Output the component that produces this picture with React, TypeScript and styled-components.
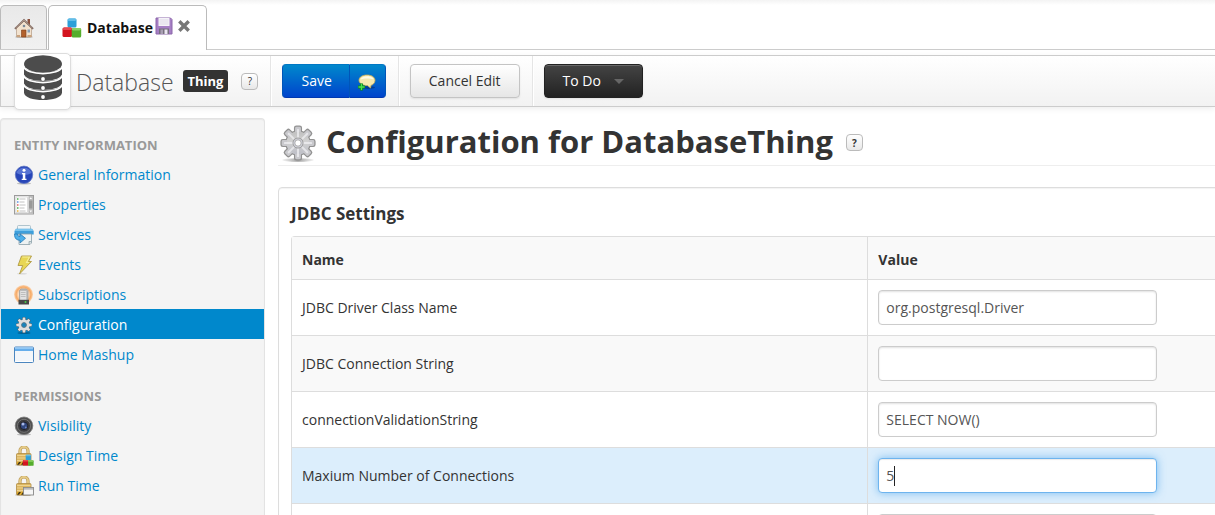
import React from "react";
import styled, { createGlobalStyle, css } from "styled-components";

const GlobalStyle = createGlobalStyle`
  *, *::before, *::after { box-sizing: border-box; }
  body {
    margin: 0;
    overflow: hidden;
    background: #fff;
    color: #333;
    font-family: "Open Sans", "Noto Sans", sans-serif;
    font-size: 14px;
    line-height: 20px;
  }
  button, input { font: inherit; }
`;

/* ---------- layout ---------- */

const Page = styled.div`
  display: flex;
  flex-direction: column;
  height: 100vh;
`;

const TabBar = styled.nav`
  display: flex;
  align-items: flex-end;
  gap: 1px;
  height: 50px;
  flex: none;
  border-bottom: 1px solid #ccc;
  background: linear-gradient(#f3f3f3, #fff 5px);
`;

const Tab = styled.div<{ $active?: boolean }>`
  display: flex;
  align-items: center;
  height: 44px;
  padding: 0 12px 0 13px;
  border: 1px solid #bbb;
  border-bottom: 0;
  border-radius: 5px 5px 0 0;
  background: linear-gradient(#e9e9e9, #f1f1f1);
  ${(p) => p.$active && css`
    gap: 2px;
    height: 45px;
    margin-bottom: -1px;
    padding: 0 14px 0 13px;
    background: #fff;
  `}
`;

const TabLink = styled.a`
  display: flex;
  align-items: center;
  gap: 5px;
  color: #111;
  font-weight: 700;
  text-decoration: none;
`;

const IconButton = styled.button`
  display: flex;
  padding: 0 1px 4px 0;
  border: 0;
  background: none;
  cursor: pointer;
`;

const Toolbar = styled.header`
  display: flex;
  align-items: stretch;
  height: 52px;
  flex: none;
  margin-top: 5px;
  border: 1px solid #ccc;
  border-right: 0;
  background: linear-gradient(#fff, #f2f2f2);
  box-shadow: 0 2px 6px rgba(0, 0, 0, 0.07);
`;

const ToolGroup = styled.div`
  display: flex;
  align-items: center;
  padding: 0 12px 0 11px;
  border-right: 1px solid #e5e5e5;
  box-shadow: 1px 0 0 #fff;
  &:last-child { border-right: 0; box-shadow: none; }
`;

const EntityGroup = styled(ToolGroup)`
  padding-left: 13px;
`;

const EntityIcon = styled.div`
  display: flex;
  justify-content: center;
  width: 57px;
  height: 57px;
  margin: -3px 5px -3px 0;
  border: 1px solid #ddd;
  border-radius: 5px;
  background: #fff;
  box-shadow: 0 1px 3px rgba(0, 0, 0, 0.08);
`;

const EntityName = styled.span`
  padding-top: 2px;
  color: #555;
  font-size: 23px;
  font-weight: 300;
  line-height: 36px;
`;

const Badge = styled.span`
  margin: 0 13px 0 9px;
  padding: 0 5px;
  border-radius: 3px;
  background: #333;
  color: #fff;
  font-size: 13px;
  font-weight: 700;
  line-height: 22px;
`;

const HelpButton = styled.button<{ $bold?: boolean }>`
  width: 17px;
  height: 17px;
  padding: 0;
  border: 1px solid #bbb;
  border-radius: 4px;
  background: linear-gradient(#fff, #e8e8e8);
  color: #333;
  font-size: 10px;
  font-weight: ${(p) => (p.$bold ? 700 : 400)};
  line-height: 14px;
  cursor: pointer;
`;

const Button = styled.button<{ $tone?: "light" | "dark" }>`
  display: flex;
  align-items: center;
  gap: 13px;
  height: 34px;
  padding: 0 18px;
  border: 1px solid ${(p) => (p.$tone === "dark" ? "#222" : "#c4c4c4")};
  border-radius: 4px;
  background: ${(p) =>
    p.$tone === "dark" ? "linear-gradient(#444, #222)" : "linear-gradient(#fff, #e6e6e6)"};
  color: ${(p) => (p.$tone === "dark" ? "#fff" : "#333")};
  box-shadow: inset 0 1px 0 rgba(255, 255, 255, 0.2), 0 1px 2px rgba(0, 0, 0, 0.08);
  cursor: pointer;
`;

const SplitButton = styled.div`
  display: flex;
  height: 34px;
`;

const SavePart = styled.button`
  height: 34px;
  padding: 0 17px 0 18px;
  border: 1px solid #0055b8;
  border-color: #0077c4 #0055b8 #0038b0;
  border-right-width: 0;
  border-radius: 4px 0 0 4px;
  background: linear-gradient(#0088cc, #0044cc);
  color: #fff;
  cursor: pointer;
  & + & {
    display: flex;
    align-items: center;
    padding: 4px 8px 0 7px;
    border-width: 1px;
    border-radius: 0 4px 4px 0;
  }
`;

const Body = styled.div`
  display: flex;
  flex: 1;
  min-height: 0;
  padding-top: 11px;
  gap: 13px;
`;

const Sidebar = styled.aside`
  flex: none;
  width: 265px;
  padding: 17px 0;
  border: 1px solid #e3e3e3;
  border-radius: 4px 4px 0 0;
  border-bottom: 0;
  background: #f4f4f4;
  box-shadow: inset 0 1px 1px rgba(0, 0, 0, 0.05);
`;

const NavHeading = styled.h2`
  margin: 0;
  padding: 0 13px 4px;
  color: #999;
  font-size: 13px;
  font-weight: 700;
  line-height: 19px;
`;

const NavList = styled.ul`
  margin: 0 0 18px;
  padding: 0;
  list-style: none;
`;

const NavLink = styled.a<{ $active?: boolean }>`
  display: flex;
  align-items: center;
  gap: 4px;
  height: 30px;
  padding: 1px 13px 0;
  color: ${(p) => (p.$active ? "#fff" : "#08c")};
  background: ${(p) => (p.$active ? "#08c" : "transparent")};
  text-decoration: none;
`;

const Main = styled.main`
  flex: 1;
  min-width: 0;
  overflow: hidden;
`;

const PageHeading = styled.div`
  display: flex;
  align-items: center;
  height: 48px;
  padding-top: 2px;
  border-bottom: 1px solid #eee;
`;

const PageTitle = styled.h1`
  margin: 0 13px 0 8px;
  padding-bottom: 4px;
  font-size: 31px;
  font-weight: 700;
  line-height: 40px;
  white-space: nowrap;
`;

const Card = styled.section`
  margin: 21px -7px 0 0;
  padding: 16px 0 12px 12px;
  border: 1px solid #ddd;
  border-radius: 4px;
  box-shadow: inset 0 1px 1px rgba(0, 0, 0, 0.05);
`;

const CardTitle = styled.h3`
  margin: 0 0 12px;
  font-size: 17px;
  font-weight: 700;
  line-height: 20px;
`;

const Settings = styled.table`
  width: 100%;
  border: 1px solid #ddd;
  border-bottom: 0;
  border-radius: 4px 0 0 0;
  border-spacing: 0;
  table-layout: fixed;
`;

const HeadCell = styled.th`
  height: 42px;
  padding: 3px 10px 0;
  background: #f9f9f9;
  text-align: left;
  font-weight: 700;
  &:first-child { width: 62%; }
  & + & { border-left: 1px solid #ddd; }
`;

const Row = styled.tr<{ $active?: boolean }>`
  background: #fff;
  &:nth-child(even) { background: #f9f9f9; }
  ${(p) => p.$active && css`&&, &&:nth-child(even) { background: #dceefc; }`}
`;

const Cell = styled.td`
  padding: 10px;
  border-top: 1px solid #ddd;
  & + & { border-left: 1px solid #ddd; }
`;

const Field = styled.div`
  position: relative;
  width: 279px;
`;

const TextInput = styled.input`
  display: block;
  width: 100%;
  height: 35px;
  padding: 0 7px;
  border: 1px solid #ccc;
  border-radius: 4px;
  background: #fff;
  color: #555;
  outline: 0;
  caret-color: transparent;
  box-shadow: inset 0 1px 2px rgba(0, 0, 0, 0.12);
  &:focus {
    border-color: #6eb4ee;
    box-shadow: inset 0 1px 1px rgba(0, 0, 0, 0.08), 0 0 8px rgba(82, 168, 236, 0.7);
  }
`;

const Caret = styled.span`
  position: absolute;
  top: 8px;
  left: 16px;
  width: 1px;
  height: 20px;
  background: #222;
`;

/* ---------- icons ---------- */

const Svg = styled.svg`
  display: block;
  flex: none;
`;

const HouseIcon = () => (
  <Svg width="20" height="20" viewBox="0 0 20 20" aria-hidden="true">
    <ellipse cx="10" cy="19" rx="9" ry="1" fill="#999" opacity=".5" />
    <path d="M13.5 1h2.500v6h-2.500z" fill="#8d5340" />
    <path d="M2.500 9.500 10 2.500l7.500 7V19h-15z" fill="#f2e2cf" stroke="#a98d74" strokeWidth=".6" />
    <path d="M.9 10.800 10 2l9.100 8.800" fill="none" stroke="#7c655c" strokeWidth="1.800" />
    <path d="M1.500 10 10 2l8.500 8" fill="none" stroke="#c4aea2" strokeWidth=".7" />
    <path d="M7.500 19v-7h4.500v7z" fill="#b2602b" stroke="#7c3d17" strokeWidth=".6" />
    <path d="M13.500 11.500h2.500v3h-2.500z" fill="#8aa0b5" />
    <circle cx="10" cy="8" r="1.300" fill="#7b8a99" />
    <path d="M3 17h3v2H3zM13.500 17h4v2h-4z" fill="#c9a27d" />
  </Svg>
);

const Cubes = () => (
  <>
    <rect x="5.500" y=".5" width="9" height="9" rx="1.500" fill="#2d9fd8" />
    <path d="M7 .5h6.500l1 1.500-1.500 1H6.500l-1-1z" fill="#63bde8" />
    <rect x=".5" y="9.500" width="9.500" height="9.500" rx="1.500" fill="#d4141f" />
    <path d="M2 9.500h7l1 1.500-1.500 1H1.500l-1-1z" fill="#e64a50" />
    <rect x="9.700" y="10" width="9.500" height="9.500" rx="1.500" fill="#55ad2c" />
    <path d="M11 10h7l1.200 1.300-1.500 1.200h-7l-1-1.200z" fill="#8dd062" />
  </>
);

const CubesIcon = () => (
  <Svg width="20" height="20" viewBox="0 0 20 20" aria-hidden="true"><Cubes /></Svg>
);

const DiskIcon = () => (
  <Svg width="18" height="18" viewBox="0 0 18 18" aria-hidden="true">
    <path d="M1 1h14.500L17 2.500V17H1z" fill="#a67fc4" stroke="#8b66aa" />
    <path d="M3.500 1h11v8h-11z" fill="#f5f3f8" />
    <path d="M4.500 3h9M4.500 5h9M4.500 7h9" stroke="#d5cfe0" strokeWidth=".7" />
    <path d="M4 11.500h10V17H4z" fill="#77707f" />
    <path d="M9.500 12.500h3V17h-3z" fill="#ece7f2" />
    <path d="M5.500 12.500H8V17H5.500z" fill="#a99fb3" />
  </Svg>
);

const CloseIcon = () => (
  <Svg width="15" height="12" viewBox="-2 0 15 12" aria-hidden="true">
    <path d="M2.500 2.500l7 7M9.500 2.500l-7 7" stroke="#777" strokeWidth="3.400" strokeLinecap="square" />
  </Svg>
);

const DatabaseIcon = () => (
  <Svg width="40" height="47" viewBox="0 0 40 47" aria-hidden="true">
    <g fill="#4c4c4c">
      <path d="M1 31.500c3 6 35 6 38 0v7c0 10-38 10-38 0z" />
      <path d="M1 22.500c3 6 35 6 38 0v7c-3 8.500-35 8.500-38 0z" />
      <path d="M1 13.500c3 6 35 6 38 0v7c-3 8.500-35 8.500-38 0z" />
      <ellipse cx="20" cy="10" rx="19" ry="8.800" />
    </g>
    <g fill="none" stroke="#fff" strokeWidth="1.600">
      <path d="M.5 12.500c2 9.500 37 9.500 39 0" />
      <path d="M.5 21.500c2 9.500 37 9.500 39 0" />
      <path d="M.5 30.500c2 9.500 37 9.500 39 0" />
    </g>
    <g fill="#fff">
      <circle cx="20" cy="25" r="1.900" />
      <circle cx="20" cy="34" r="1.900" />
      <circle cx="20" cy="43" r="1.900" />
    </g>
  </Svg>
);

const CommentAddIcon = () => (
  <Svg width="20" height="18" viewBox="0 0 20 18" aria-hidden="true">
    <ellipse cx="11" cy="13.500" rx="7" ry="1.500" fill="#013" opacity=".35" />
    <path d="M10 1C14.500 1 18 3.200 18 6.300S15.500 11 14 11.300L13.500 14l-3-2.400C6 11.600 2 9.500 2 6.300S5.500 1 10 1z" fill="#f4e8ae" stroke="#c9ad53" strokeWidth=".8" />
    <path d="M10 2.200c4 0 6.300 1.500 6.300 3.200-3-1.200-9.500-1.200-12.600 0C4 3.500 6.500 2.200 10 2.200z" fill="#fffbe6" />
    <path d="M4.500 9.500v7M1 13h7" stroke="#0a8a1a" strokeWidth="3" />
    <path d="M4.500 10v6M1.500 13h6" stroke="#4be050" strokeWidth="1.300" />
  </Svg>
);

const Teeth = ({ count, inner, outer, width }: { count: number; inner: number; outer: number; width: number }) => (
  <>
    {Array.from({ length: count }, (_, i) => (
      <rect key={i} x={-width / 2} y={-outer} width={width} height={outer - inner} rx={width / 4} transform={`rotate(${(i * 360) / count})`} />
    ))}
  </>
);

const BigGearIcon = () => (
  <Svg width="40" height="38" viewBox="0 0 40 38" aria-hidden="true">
    <defs>
      <linearGradient id="steel" x1="0" y1="-17" x2="0" y2="17" gradientUnits="userSpaceOnUse">
        <stop offset="0" stopColor="#b5b5b5" /><stop offset=".45" stopColor="#d2d2d2" /><stop offset="1" stopColor="#b4b6c2" />
      </linearGradient>
      <linearGradient id="shade"><stop offset="0" stopColor="#999" stopOpacity=".1" /><stop offset=".5" stopColor="#888" stopOpacity=".8" /><stop offset="1" stopColor="#999" stopOpacity=".1" /></linearGradient>
    </defs>
    <ellipse cx="20" cy="36" rx="16" ry="1.800" fill="url(#shade)" />
    <g transform="translate(20 19)">
      <g fill="#929292" stroke="#929292" strokeWidth="1.600"><Teeth count={8} inner={8} outer={16.800} width={6.500} /><circle r="12" /></g>
      <g fill="url(#steel)"><circle r="11.600" /></g>
      <g fill="#c9c9cd"><Teeth count={8} inner={8} outer={16.300} width={5.800} /></g>
      <circle r="11" fill="url(#steel)" />
      <g fill="#f3f3f6" opacity=".7"><Teeth count={8} inner={5} outer={14} width={2} /></g>
      <circle r="5.500" fill="#9c9c9c" />
      <circle r="4.600" fill="#d5d6df" />
      <circle r="3.200" fill="#fff" stroke="#999" strokeWidth=".8" />
    </g>
  </Svg>
);

const InfoIcon = () => (
  <>
    <ellipse cx="10" cy="18.500" rx="7" ry="1" fill="#999" opacity=".6" />
    <circle cx="10" cy="9.800" r="8.700" fill="#2846b8" stroke="#6177c4" strokeWidth=".8" />
    <path d="M2.500 8C4 1 16 1 17.500 8c-4 2.500-11 2.500-15 0z" fill="#7f9aea" opacity=".55" />
    <circle cx="10" cy="5.200" r="1.500" fill="#fff" />
    <path d="M8 8h3.300v5.700h1.200V15H7.700v-1.300h1.100V9.200H8z" fill="#fff" />
  </>
);

const PropertiesIcon = () => (
  <>
    <rect x=".5" y=".5" width="19" height="18.500" fill="#ececec" stroke="#9b9b9b" />
    <rect x="2" y="2" width="11.500" height="15.500" fill="#fff" stroke="#ccc" strokeWidth=".6" />
    <rect x="14.500" y="1" width="4.500" height="17.500" fill="#bdbdbd" />
    <rect x="15" y="5.500" width="3.500" height="8" fill="#999" />
    <path d="M15.500 4 16.800 2.200 18 4zM15.500 15.500h2.500l-1.200 2z" fill="#fff" />
    <path d="M5.500 4h6M5.500 7h5M5.500 10h6M5.500 13h5M5.500 16h6" stroke="#bbb" strokeWidth=".9" />
    <path d="M3 4h1.500M3 13h1.500" stroke="#4cae4c" strokeWidth="1.500" />
    <path d="M3 7h1.500" stroke="#5b8fe0" strokeWidth="1.500" />
    <path d="M3 10h1.500" stroke="#e06060" strokeWidth="1.500" />
    <path d="M3 16h1.500" stroke="#eeb030" strokeWidth="1.500" />
  </>
);

const ServicesIcon = () => (
  <>
    <rect x="3.500" y=".5" width="13" height="6" rx="1" fill="#f0f5f7" stroke="#9eb7c3" strokeWidth=".8" />
    <path d="M.5 6 2 3.800h16L19.700 6v3.500H.5z" fill="#3f9fdb" />
    <path d="M.8 5.800 2 4.200h16l1.300 1.600z" fill="#8fd0f3" />
    <path d="M5 9h12.500v9L16 19.500H5z" fill="#eef2f2" stroke="#8ba0a8" strokeWidth=".8" />
    <path d="M15 19.500v-3h2.500" fill="#cfd8db" stroke="#8ba0a8" strokeWidth=".7" />
    <path d="M.5 9c0 5 2.500 6.200 5.500 6.200V18l5.500-4.700L6 8.800v2.700c-1.500 0-2.500-.5-2.500-2.500z" fill="#4fb0ea" stroke="#2478b5" strokeWidth=".8" />
  </>
);

const EventsIcon = () => (
  <>
    <ellipse cx="8" cy="18.800" rx="5" ry=".8" fill="#bbb" opacity=".5" />
    <path d="M7.500 1h10l-3 5.500h3L5.500 19l3.200-8.500H4z" fill="#e8d653" stroke="#b09a45" strokeWidth=".9" strokeLinejoin="round" />
    <path d="M8.200 2h7.300l-3 5.500H15" fill="none" stroke="#f5ee9a" strokeWidth="1.100" />
  </>
);

const SubscriptionsIcon = () => (
  <>
    <defs>
      <radialGradient id="signal">
        <stop offset=".5" stopColor="#fce3cb" /><stop offset=".78" stopColor="#f6a964" /><stop offset="1" stopColor="#fbd5b2" />
      </radialGradient>
    </defs>
    <circle cx="9.500" cy="9.500" r="9.500" fill="url(#signal)" />
    <path d="M5.500 5.500 7 4h5.500L14 5.500v10H5.500z" fill="#bcbcbc" stroke="#999" strokeWidth=".7" />
    <path d="M6.200 6h6v9h-6z" fill="#e2e2e2" />
    <path d="M6.800 7.500h4.800M6.800 9.500h4.800M6.800 11.500h4.800" stroke="#b5b5b5" strokeWidth=".8" />
    <path d="M4.500 14.800h10.500v4.700H4.500z" fill="#484848" />
    <circle cx="11.500" cy="17" r="1" fill="#48d048" />
  </>
);

const SmallGearIcon = () => (
  <>
    <ellipse cx="10" cy="18" rx="6.500" ry="1" fill="#024a70" opacity=".6" />
    <g transform="translate(10 10)">
      <g fill="#4d6675" stroke="#4d6675" strokeWidth="1"><Teeth count={8} inner={3} outer={7.500} width={3} /></g>
      <g fill="#e0e0e0"><Teeth count={8} inner={3} outer={7.600} width={2.600} /></g>
      <circle r="4.100" fill="none" stroke="#dedede" strokeWidth="3" />
      <circle r="2.400" fill="#1683bd" stroke="#777" strokeWidth=".6" />
    </g>
  </>
);

const WindowIcon = () => (
  <>
    <rect x=".5" y="2" width="19" height="15.500" rx="1" fill="#f3f6fa" stroke="#4c86bf" />
    <path d="M1 2.500h18V6H1z" fill="#65adeb" />
    <path d="M1 2.500h18v1.200H1z" fill="#a4d3fa" />
    <path d="M1.500 16.500h17" stroke="#fff" />
  </>
);

const LensIcon = () => (
  <>
    <ellipse cx="10" cy="18.500" rx="7" ry="1" fill="#999" opacity=".6" />
    <circle cx="10" cy="9.800" r="8.800" fill="#505050" stroke="#777" strokeWidth=".8" />
    <circle cx="10" cy="9.800" r="6.500" fill="#3b3b3e" stroke="#757575" strokeWidth="1" />
    <circle cx="10" cy="9.800" r="3.800" fill="#31477e" stroke="#22222a" />
    <circle cx="9" cy="8" r="1.500" fill="#a7b9e8" />
    <circle cx="11.800" cy="11.500" r=".9" fill="#6d86c8" />
  </>
);

const Padlock = () => (
  <>
    <ellipse cx="9" cy="19" rx="8" ry="1" fill="#999" opacity=".5" />
    <path d="M6 9V5a4 4 0 0 1 8 0v4" fill="none" stroke="#bd9c57" strokeWidth="3.200" />
    <path d="M6 9V5a4 4 0 0 1 8 0v4" fill="none" stroke="#e4ca86" strokeWidth="1.900" />
    <rect x="2.500" y="7.500" width="14.500" height="11.500" rx="1" fill="#dcb660" stroke="#b08c43" strokeWidth=".8" />
    <path d="M3 9.500h13.500M3 12h13.500M3 14.500h13.500" stroke="#f0d795" strokeWidth=".9" />
    <path d="M3 16h7v2.800H3z" fill="#e4ac28" />
    <path d="m3 18.800 2-2.800h2l-2 2.800zm4 0L9 16h2l-2 2.800z" fill="#40351d" />
  </>
);

const DesignLockIcon = () => (
  <>
    <Padlock />
    <g transform="translate(8.500 8.500) scale(.58)"><Cubes /></g>
  </>
);

const RunLockIcon = () => (
  <>
    <Padlock />
    <rect x="9.500" y="11.500" width="10" height="7.500" fill="#f5f5f5" stroke="#888" strokeWidth=".9" />
    <path d="M10 12h9v1.700h-9z" fill="#bbb" />
  </>
);

/* ---------- content ---------- */

type Entry = { label: string; icon: React.ReactNode; active?: boolean };

const sections: { title: string; entries: Entry[] }[] = [
  {
    title: "ENTITY INFORMATION",
    entries: [
      { label: "General Information", icon: <InfoIcon /> },
      { label: "Properties", icon: <PropertiesIcon /> },
      { label: "Services", icon: <ServicesIcon /> },
      { label: "Events", icon: <EventsIcon /> },
      { label: "Subscriptions", icon: <SubscriptionsIcon /> },
      { label: "Configuration", icon: <SmallGearIcon />, active: true },
      { label: "Home Mashup", icon: <WindowIcon /> },
    ],
  },
  {
    title: "PERMISSIONS",
    entries: [
      { label: "Visibility", icon: <LensIcon /> },
      { label: "Design Time", icon: <DesignLockIcon /> },
      { label: "Run Time", icon: <RunLockIcon /> },
    ],
  },
];

const settings = [
  { id: "driver", label: "JDBC Driver Class Name", value: "org.postgresql.Driver" },
  { id: "connection", label: "JDBC Connection String", value: "" },
  { id: "validation", label: "connectionValidationString", value: "SELECT NOW()" },
  { id: "max", label: "Maxium Number of Connections", value: "5", active: true },
  { id: "user", label: "", value: "" },
];

export default function App() {
  return (
    <Page>
      <GlobalStyle />
      <TabBar>
        <Tab>
          <TabLink href="#home" aria-label="Home"><HouseIcon /></TabLink>
        </Tab>
        <Tab $active>
          <TabLink href="#database"><CubesIcon />Database</TabLink>
          <IconButton aria-label="Save entity"><DiskIcon /></IconButton>
          <IconButton aria-label="Close tab"><CloseIcon /></IconButton>
        </Tab>
      </TabBar>

      <Toolbar>
        <EntityGroup>
          <EntityIcon><DatabaseIcon /></EntityIcon>
          <EntityName>Database</EntityName>
          <Badge>Thing</Badge>
          <HelpButton aria-label="Help on things">?</HelpButton>
        </EntityGroup>
        <ToolGroup>
          <SplitButton>
            <SavePart>Save</SavePart>
            <SavePart aria-label="Save with comment"><CommentAddIcon /></SavePart>
          </SplitButton>
        </ToolGroup>
        <ToolGroup>
          <Button>Cancel Edit</Button>
        </ToolGroup>
        <ToolGroup>
          <Button $tone="dark">
            To Do
            <Svg width="10" height="5" viewBox="0 0 10 5" aria-hidden="true"><path d="M0 0h10L5 5z" fill="#666" /></Svg>
          </Button>
        </ToolGroup>
      </Toolbar>

      <Body>
        <Sidebar>
          {sections.map((section) => (
            <nav key={section.title} aria-label={section.title}>
              <NavHeading>{section.title}</NavHeading>
              <NavList>
                {section.entries.map((entry) => (
                  <li key={entry.label}>
                    <NavLink href="#" $active={entry.active}>
                      <Svg width="20" height="20" viewBox="0 0 20 20" aria-hidden="true">{entry.icon}</Svg>
                      {entry.label}
                    </NavLink>
                  </li>
                ))}
              </NavList>
            </nav>
          ))}
        </Sidebar>

        <Main>
          <PageHeading>
            <BigGearIcon />
            <PageTitle>Configuration for DatabaseThing</PageTitle>
            <HelpButton $bold aria-label="Help on configuration">?</HelpButton>
          </PageHeading>
          <Card>
            <CardTitle>JDBC Settings</CardTitle>
            <Settings>
              <thead>
                <tr><HeadCell>Name</HeadCell><HeadCell>Value</HeadCell></tr>
              </thead>
              <tbody>
                {settings.map((s) => (
                  <Row key={s.id} $active={s.active}>
                    <Cell><label htmlFor={s.id}>{s.label}</label></Cell>
                    <Cell>
                      <Field>
                        <TextInput id={s.id} type="text" defaultValue={s.value} autoFocus={s.active} />
                        {s.active && <Caret />}
                      </Field>
                    </Cell>
                  </Row>
                ))}
              </tbody>
            </Settings>
          </Card>
        </Main>
      </Body>
    </Page>
  );
}
